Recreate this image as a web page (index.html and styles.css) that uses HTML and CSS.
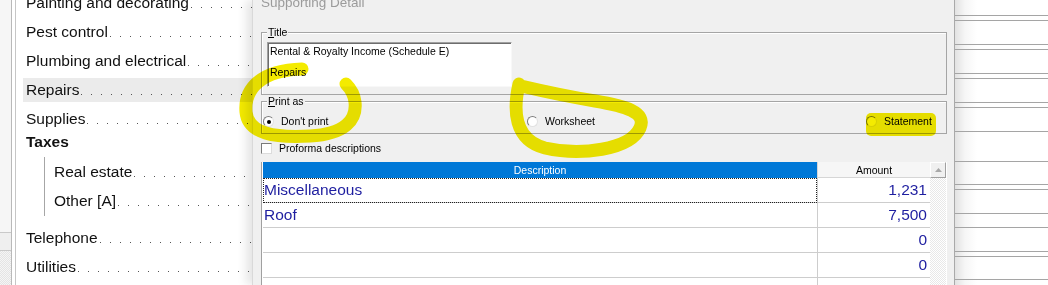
FILE: index.html
```html
<!DOCTYPE html>
<html lang="en">
<head>
  <meta charset="UTF-8" />
  <title>Supporting Detail</title>
  <link rel="stylesheet" href="styles.css">
</head>
<body>

<div class="screen">

  <!-- hoja de fondo con la lista de gastos -->
  <aside class="sheet">
    <div class="sheet-edge">
      <div class="edge-top"></div>
      <div class="edge-mid"></div>
      <div class="edge-bot"></div>
    </div>
    <div class="sheet-list">
      <div class="item"><span class="name">Painting and decorating</span><span class="dots"></span></div>
      <div class="item"><span class="name">Pest control</span><span class="dots"></span></div>
      <div class="item"><span class="name">Plumbing and electrical</span><span class="dots"></span></div>
      <div class="item selected"><span class="name">Repairs</span><span class="dots"></span></div>
      <div class="item"><span class="name">Supplies</span><span class="dots"></span></div>
      <div class="item heading"><span class="name">Taxes</span></div>
      <div class="subgroup">
        <div class="item"><span class="name">Real estate</span><span class="dots"></span></div>
        <div class="item"><span class="name">Other [A]</span><span class="dots"></span></div>
      </div>
      <div class="item after-group"><span class="name">Telephone</span><span class="dots"></span></div>
      <div class="item"><span class="name">Utilities</span><span class="dots"></span></div>
    </div>
  </aside>

  <!-- dialogo -->
  <section class="dialog">
    <div class="dlg-caption">Supporting Detail</div>

    <fieldset class="group title-group">
      <legend><u>T</u>itle</legend>
      <div class="textbox">
        <div class="tb-line">Rental &amp; Royalty Income (Schedule E)</div>
        <div class="tb-line second">Repairs</div>
      </div>
    </fieldset>

    <fieldset class="group print-group">
      <legend><u>P</u>rint as</legend>
      <div class="radios">
        <div class="radio checked"><span class="circle"></span>Don't print</div>
        <div class="radio"><span class="circle"></span>Worksheet</div>
        <div class="radio"><span class="circle"></span>Statement</div>
      </div>
    </fieldset>

    <div class="check"><span class="box"></span>Proforma descriptions</div>

    <div class="grid">
      <div class="gh desc">Description</div>
      <div class="gh amt">Amount</div>
      <div class="gh scroll-up">
        <svg width="7" height="4" viewBox="0 0 7 4"><polygon points="0,4 7,4 3.5,0" fill="#a8a8a8"/></svg>
      </div>
      <div class="track"></div>

      <div class="cell focus">Miscellaneous</div>
      <div class="cell num">1,231</div>
      <div class="cell">Roof</div>
      <div class="cell num">7,500</div>
      <div class="cell"></div>
      <div class="cell num">0</div>
      <div class="cell"></div>
      <div class="cell num">0</div>
      <div class="cell"></div>
      <div class="cell num"></div>
    </div>
  </section>

  <!-- ventana de atras -->
  <div class="behind">
    <div class="ln pair"></div>
    <div class="ln pair"></div>
    <div class="ln pair"></div>
    <div class="ln pair"></div>
    <div class="ln"></div>
    <div class="ln wide"></div>
    <div class="ln pair tight"></div>
    <div class="ln"></div>
    <div class="ln near"></div>
    <div class="ln pair"></div>
    <div class="ln tight"></div>
  </div>

</div>

<!-- marcas de resaltador amarillo -->
<svg class="marker" width="1048" height="285" viewBox="0 0 1048 285">
  <path d="M346 84 C350 88 354 93 355 102 C357 120 345 134 310 136 C275 138 248 134 246 112 C244 88 262 70 302 69" />
  <path d="M519 84 C513 110 514 140 545 148 C580 156 630 150 640 128 C647 112 625 106 595 101 C565 96 538 90 521 86" />
  <rect x="866" y="113" width="70" height="23" rx="5" />
</svg>

</body>
</html>
```

FILE: styles.css
```css
* {
  box-sizing: border-box;
  margin: 0;
  padding: 0;
}

html, body {
  width: 1048px;
  height: 285px;
  overflow: hidden;
  background: #fff;
}

body {
  position: relative;
  font-family: 'Liberation Sans', Arial, sans-serif;
  color: #111;
}

.screen {
  display: flex;
  height: 285px;
}

/* ---- hoja ---- */

.sheet {
  width: 252px;
  flex: none;
  display: flex;
  background: #fff;
}

.sheet-edge {
  width: 12px;
  border-right: 1px solid #b9b9b9;
  display: flex;
  flex-direction: column;
}

.edge-top {
  height: 233px;
  background: #f6f6f6;
  border-bottom: 1px solid #c9c9c9;
}

.edge-mid {
  height: 18px;
  background: #efefef;
  border-bottom: 1px solid #c9c9c9;
}

.edge-bot {
  flex: 1;
  background: repeating-conic-gradient(#f5f5f5 0 25%, #e4e4e4 0 50%) 0 0 / 2px 2px;
}

.sheet-list {
  flex: 1;
  margin-left: 3px;
  border-left: 1px solid #c6c6c6;
  font-size: 15.5px;
}

.item {
  display: flex;
  align-items: baseline;
  height: 24px;
  line-height: 24px;
  margin: 5px 0 0 7px;
  padding-left: 3px;
  white-space: nowrap;
}

.sheet-list > .item:first-child {
  margin-top: -9px;
}

.item.selected {
  background: #ebebeb;
}

.item.heading {
  height: 22px;
  line-height: 22px;
  margin-top: 0;
  font-weight: bold;
}

.dots {
  flex: 1;
  height: 1px;
  margin-left: 2px;
  background: linear-gradient(90deg, #555 1px, transparent 1px) 0 0 / 10px 1px repeat-x;
}

.subgroup {
  margin: 4px 0 0 28px;
  border-left: 1px solid #a6a6a6;
  padding: 3px 0;
}

.subgroup .item {
  padding-left: 2px;
}

.subgroup .item:first-child {
  margin-top: 0;
}

.item.after-group {
  margin-top: 10px;
}

/* ---- dialogo ---- */

.dialog {
  width: 703px;
  flex: none;
  background: #f0f0f0;
  border-left: 1px solid #d9d9d9;
  border-right: 1px solid #a9a9a9;
  padding: 0 7px 0 8px;
  box-shadow: -6px 0 9px rgba(0, 0, 0, 0.10);
  font-size: 10.5px;
  color: #000;
}

.dlg-caption {
  margin-top: -5px;
  height: 16px;
  line-height: 16px;
  font-size: 13.5px;
  color: #9b9b9b;
}

.group {
  border: 1px solid #a5a5a5;
  box-shadow: inset 1px 1px 0 #fff;
}

.group legend {
  line-height: 13px;
  padding: 0 1px;
  background: #f0f0f0;
}

.title-group {
  margin-top: 15px;
  padding: 3px 0 7px 5px;
}

.textbox {
  width: 245px;
  height: 45px;
  background: #fff;
  border: 1px solid;
  border-color: #a0a0a0 #f8f8f8 #f8f8f8 #a0a0a0;
  box-shadow: inset 1px 1px 0 #6d6d6d;
  padding: 2px 0 0 2px;
  line-height: 13px;
}

.tb-line.second {
  margin-top: 8px;
}

.print-group {
  padding: 7px 0 5px 1px;
}

.print-group legend {
  margin-left: 4px;
}

.radios {
  display: grid;
  grid-template-columns: 264px 339px auto;
  line-height: 13px;
}

.radio {
  display: flex;
  align-items: center;
}

.circle {
  width: 11px;
  height: 11px;
  margin-right: 7px;
  border-radius: 50%;
  border: 1px solid;
  border-color: #7c7c7c #e2e2e2 #e2e2e2 #7c7c7c;
  background: #fff;
  display: flex;
  align-items: center;
  justify-content: center;
}

.radio.checked .circle::after {
  content: '';
  width: 4px;
  height: 4px;
  border-radius: 50%;
  background: #000;
}

.check {
  margin-top: 8px;
  display: flex;
  align-items: center;
  line-height: 13px;
}

.box {
  width: 11px;
  height: 11px;
  margin-right: 7px;
  background: #fff;
  border: 1px solid;
  border-color: #7a7a7a #dcdcdc #dcdcdc #7a7a7a;
}

/* ---- tabla ---- */

.grid {
  margin-top: 7px;
  border-left: 1px solid #a0a0a0;
  padding-left: 1px;
  display: grid;
  grid-template-columns: 554px 113px 16px;
  grid-template-rows: 16px repeat(5, 25px);
  background: #fff;
}

.gh {
  line-height: 16px;
  text-align: center;
}

.gh.desc {
  background: #0078d7;
  color: #fff;
}

.gh.amt {
  background: #f6f6f6;
  border-left: 1px solid #d6d6d6;
  border-bottom: 1px solid #d6d6d6;
}

.gh.scroll-up {
  background: #f0f0f0;
  border: 1px solid;
  border-color: #fff #a0a0a0 #a0a0a0 #fff;
  display: flex;
  align-items: center;
  justify-content: center;
}

.track {
  grid-column: 3;
  grid-row: 2 / 7;
  background: repeating-conic-gradient(#fff 0 25%, #e8e8e8 0 50%) 0 0 / 2px 2px;
}

.cell {
  border-bottom: 1px solid #cdcdcd;
  font-size: 15.5px;
  line-height: 24px;
  color: #1e1ea0;
  padding-left: 1px;
  white-space: nowrap;
  overflow: hidden;
}

.cell.num {
  border-left: 1px solid #cdcdcd;
  text-align: right;
  padding-right: 3px;
}

.cell.focus {
  outline: 1px dotted #222;
  outline-offset: -1px;
}

/* ---- ventana de atras ---- */

.behind {
  flex: 1;
  padding-top: 15px;
  background: linear-gradient(90deg, #e2e2e2, #f6f6f6 10px, #fff 22px);
}

.ln {
  border-top: 1px solid #a5a5a5;
  margin-top: 23px;
}

.ln:first-child {
  margin-top: 0;
}

.ln.pair {
  height: 6px;
  border-bottom: 1px solid #a5a5a5;
}

.ln.wide {
  margin-top: 29px;
}

.ln.tight {
  margin-top: 22px;
}

.ln.near {
  margin-top: 13px;
}

/* ---- resaltador ---- */

.marker {
  position: absolute;
  top: 0;
  left: 0;
  pointer-events: none;
  mix-blend-mode: multiply;
}

.marker path {
  fill: none;
  stroke: #f4eb00;
  stroke-width: 13;
  stroke-linecap: round;
}

.marker rect {
  fill: #f4eb00;
}
```
